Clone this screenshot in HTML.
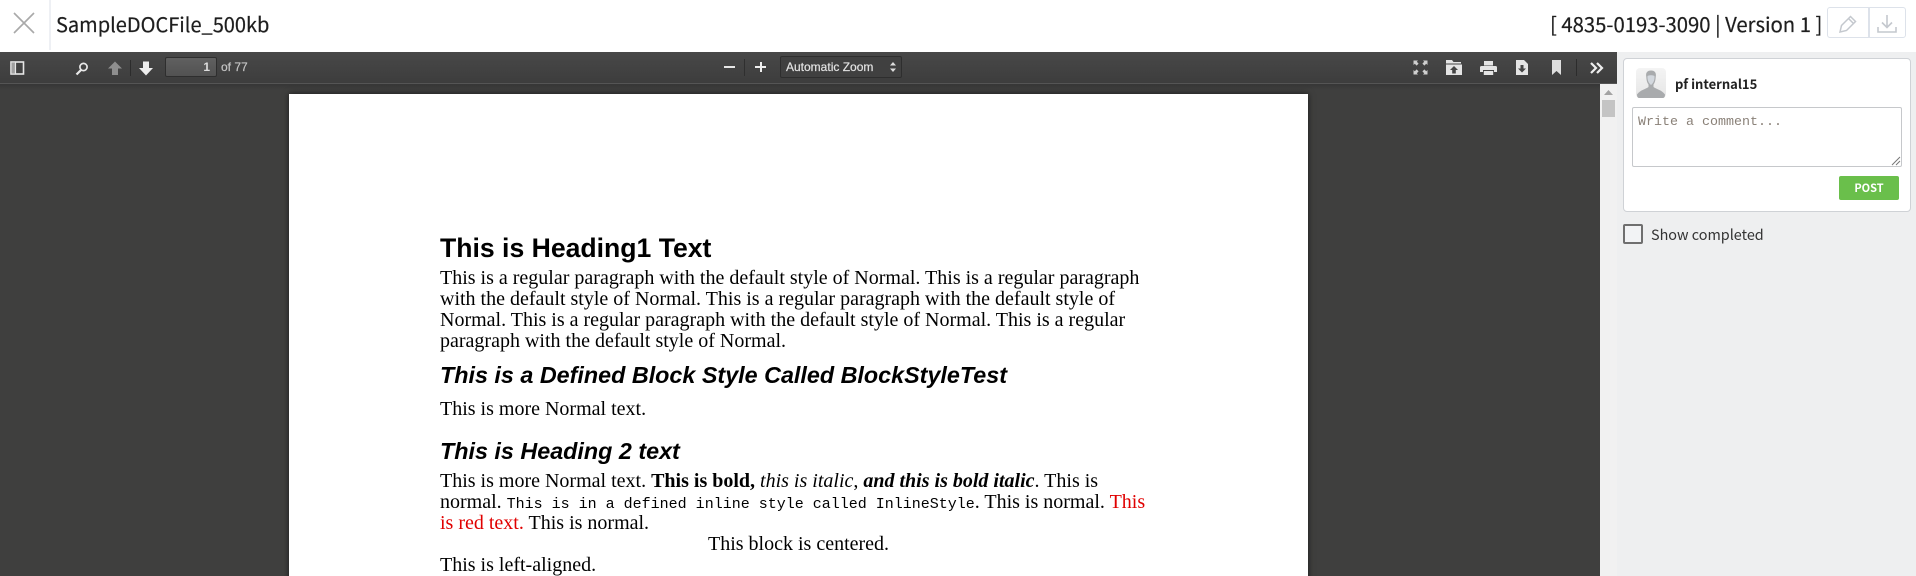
<!DOCTYPE html>
<html><head><meta charset="utf-8"><style>
html,body{margin:0;padding:0;background:#3f3f3e;overflow:hidden}
#r{position:relative;width:1916px;height:576px;overflow:hidden;font-family:"Liberation Sans",sans-serif}
.a{position:absolute;white-space:nowrap}
.s{font-family:"Noto Sans CJK JP","Liberation Sans",sans-serif}
.l{position:absolute;left:440px;white-space:nowrap;font:20px/21px "Liberation Serif",serif;color:#000}
svg{position:absolute;overflow:visible}
</style></head><body><div id="r">
<div class="a" style="left:0;top:0;width:1916px;height:52px;background:#fff"></div>
<svg style="left:13px;top:12px" width="22" height="22"><path d="M1 1L21 21M21 1L1 21" stroke="#a9a9a9" stroke-width="1.6" fill="none"/></svg>
<div class="a" style="left:49px;top:0;width:2px;height:50px;background:#eef0f4"></div>
<div class="a s" style="left:56px;top:9px;font-size:20px;line-height:29px;color:#1e1e1e;-webkit-text-stroke:.2px #1e1e1e">SampleDOCFile_500kb</div>
<div class="a s" style="left:1550px;top:9px;font-size:20.3px;line-height:29px;color:#1e1e1e;-webkit-text-stroke:.2px #1e1e1e">[ 4835-0193-3090 | Version 1 ]</div>
<div class="a" style="left:1827px;top:7px;width:79px;height:31px;border:1.5px solid #dde2ea;border-radius:3px;box-sizing:border-box"></div>
<div class="a" style="left:1868px;top:8px;width:1.5px;height:30px;background:#dde2ea"></div>
<svg style="left:1838px;top:14px" width="20" height="20"><path d="M2 18L3.5 11.5L12.5 2.5L17.5 7.5L8.5 16.5ZM10.5 4.5L15.5 9.5" fill="none" stroke="#c4c8ce" stroke-width="1.5"/></svg>
<svg style="left:1877px;top:14px" width="20" height="20"><path d="M10 1V13M5 8.5L10 13.5L15 8.5M1 13V18H19V13" fill="none" stroke="#c4c8ce" stroke-width="1.6"/></svg>

<div class="a" style="left:0;top:52px;width:1617px;height:32px;background:linear-gradient(#484848,#3d3d3d);border-bottom:1px solid #555;box-sizing:border-box"></div>
<div class="a" style="left:0;top:84px;width:1600px;height:492px;background:#3f3f3e"></div>
<div class="a" style="left:0;top:84px;width:1600px;height:6px;background:linear-gradient(#363636,#3f3f3e)"></div>
<svg style="left:10px;top:61px" width="15" height="14"><rect x="1" y="1" width="12.5" height="12" fill="none" stroke="#e6e6e6" stroke-width="1.6"/><rect x="1.5" y="1.5" width="3.5" height="11" fill="#a0a0a0"/><path d="M5.5 1V13" stroke="#e6e6e6" stroke-width="1.2"/></svg>
<svg style="left:75px;top:62px" width="14" height="14"><circle cx="8.5" cy="5" r="3.6" fill="none" stroke="#e8e8e8" stroke-width="1.7"/><path d="M6 8L1.5 12.5" stroke="#e8e8e8" stroke-width="2.2"/></svg>
<svg style="left:108px;top:61px" width="14" height="15"><path d="M7 0.5L14 7.5H10V14H4V7.5H0Z" fill="#8e8e8e"/></svg>
<div class="a" style="left:130px;top:60px;width:1px;height:16px;background:#2c2c2c"></div>
<svg style="left:139px;top:61px" width="14" height="15"><path d="M4 0.5H10V7H14L7 14.5L0 7H4Z" fill="#eee"/></svg>
<div class="a" style="left:165px;top:57px;width:52px;height:20px;background:linear-gradient(#606060,#525252);border:1px solid #2e2e2e;border-radius:2px;box-sizing:border-box;color:#ddd;font-size:12px;line-height:18px;text-align:right;padding-right:6px;font-weight:bold">1</div>
<div class="a" style="left:221px;top:59px;font-size:12px;line-height:16px;color:#c4c4c4;-webkit-text-stroke:.2px #c4c4c4">of 77</div>
<div class="a" style="left:724px;top:66px;width:11px;height:2px;background:#e6e6e6"></div>
<div class="a" style="left:744px;top:59px;width:1px;height:17px;background:#2f2f2f"></div>
<div class="a" style="left:755px;top:66px;width:11px;height:2px;background:#eee"></div>
<div class="a" style="left:759.5px;top:62px;width:2px;height:10px;background:#eee"></div>
<div class="a" style="left:780px;top:56px;width:122px;height:22px;background:#404040;border:1px solid #2e2e2e;border-radius:2px;box-sizing:border-box"></div>
<div class="a" style="left:786px;top:59px;font-size:12px;line-height:16px;color:#e2e2e2;-webkit-text-stroke:.2px #e2e2e2">Automatic Zoom</div>
<svg style="left:889px;top:62px" width="8" height="10"><path d="M4 0L7 3.5H1ZM4 10L7 6.5H1Z" fill="#ddd"/></svg>
<svg style="left:1413px;top:60px" width="15" height="15" fill="#cfcfcf"><path d="M0.5 0.5H5L3.8 1.8L5.6 3.6L3.6 5.6L1.8 3.8L0.5 5ZM14.5 0.5V5L13.2 3.8L11.4 5.6L9.4 3.6L11.2 1.8L10 0.5ZM0.5 14.5V10L1.8 11.2L3.6 9.4L5.6 11.4L3.8 13.2L5 14.5ZM14.5 14.5H10L11.2 13.2L9.4 11.4L11.4 9.4L13.2 11.2L14.5 10Z"/></svg>
<svg style="left:1446px;top:60px" width="16" height="15"><path d="M0 0H6L7.5 2H15V3.5H0ZM0 4.5H16V15H0Z" fill="#e4e4e4"/><path d="M8 6L12 10H9.8V13.5H6.2V10H4Z" fill="#444"/></svg>
<svg style="left:1480px;top:61px" width="17" height="14"><path d="M4 0H13V4.5H4ZM1.5 5H15.5Q17 5 17 6.5V11H14V9H3V11H0V6.5Q0 5 1.5 5ZM3.8 10H13.2V14H3.8Z" fill="#e4e4e4"/></svg>
<svg style="left:1516px;top:60px" width="12" height="15"><path d="M0 0H8L12 4V15H0Z" fill="#e4e4e4"/><path d="M4.5 5H7.5V8.5H10L6 12.5L2 8.5H4.5Z" fill="#444"/></svg>
<svg style="left:1552px;top:60px" width="9" height="15"><path d="M0 0H9V15L4.5 11L0 15Z" fill="#dedede"/></svg>
<div class="a" style="left:1576px;top:59px;width:1px;height:17px;background:#2c2c2c"></div>
<svg style="left:1590px;top:62px" width="14" height="12"><path d="M1 1L6 6L1 11M7 1L12 6L7 11" fill="none" stroke="#eee" stroke-width="2.2"/></svg>

<div class="a" style="left:1600px;top:84px;width:17px;height:492px;background:#f1f1f1"></div>
<svg style="left:1604px;top:90px" width="9" height="6"><path d="M4.5 0L9 5H0Z" fill="#a3a3a3"/></svg>
<div class="a" style="left:1602px;top:100px;width:13px;height:17px;background:#c4c4c4"></div>

<div class="a" style="left:1617px;top:52px;width:299px;height:524px;background:#eeeff0"></div>
<div class="a" style="left:1623px;top:58px;width:288px;height:154px;background:#fff;border:1px solid #cfd2d6;border-radius:4px;box-sizing:border-box"></div>
<div class="a" style="left:1636px;top:68px;width:30px;height:30px;background:linear-gradient(#f4f4f4,#e6e6e6);border-radius:4px"></div>
<svg style="left:1636px;top:68px" width="30" height="30"><path d="M15 2.5C11 2.5 9.5 5 10.3 9C10.5 12 10.8 14 12.5 16.5V19C10 21 4 22 1 26.5Q1 30 3 30H27Q29 30 29 26.5C26 22 20 21 17.5 19V16.5C19.2 14 19.5 12 19.7 9C20.5 5 19 2.5 15 2.5Z" fill="#a9abad"/><path d="M11.5 8C13 7 17 7 18.5 8C18.8 12 17.5 15 15 17C12.5 15 11.2 12 11.5 8Z" fill="#d3d8de"/></svg>
<div class="a s" style="left:1675px;top:74px;font-size:13px;line-height:19px;font-weight:700;color:#222">pf internal15</div>
<div class="a" style="left:1632px;top:107px;width:270px;height:60px;background:#fff;border:1px solid #c6c8cb;border-radius:2px;box-sizing:border-box"></div>
<div class="a" style="left:1638px;top:115px;font:13.33px/15px 'Liberation Mono',monospace;color:#8a8178">Write a comment...</div>
<svg style="left:1891px;top:156px" width="10" height="10"><path d="M1 9L9 1M5 9L9 5" stroke="#777" stroke-width="1"/></svg>
<div class="a s" style="left:1839px;top:176px;width:60px;height:24px;background:#6abf4b;border-radius:2px;color:#fff;font-size:11px;font-weight:700;line-height:24px;text-align:center">POST</div>
<div class="a" style="left:1623px;top:224px;width:20px;height:20px;border:2px solid #6f6f6f;background:#f2f3f5;border-radius:2px;box-sizing:border-box"></div>
<div class="a s" style="left:1651px;top:224px;font-size:14.4px;line-height:21px;color:#333">Show completed</div>

<div class="a" style="left:289px;top:94px;width:1019px;height:500px;background:#fff;box-shadow:0 0 6px rgba(0,0,0,.6)"></div>
<div class="a" style="left:440px;top:233px;font:bold 26.6px/31px 'Liberation Sans',sans-serif;color:#000">This is Heading1 Text</div>
<div class="l" style="top:268px">This is a regular paragraph with the default style of Normal. This is a regular paragraph</div>
<div class="l" style="top:289px">with the default style of Normal. This is a regular paragraph with the default style of</div>
<div class="l" style="top:310px">Normal. This is a regular paragraph with the default style of Normal. This is a regular</div>
<div class="l" style="top:331px">paragraph with the default style of Normal.</div>
<div class="a" style="left:440px;top:362px;font:italic bold 23.33px/27px 'Liberation Sans',sans-serif;color:#000">This is a Defined Block Style Called BlockStyleTest</div>
<div class="l" style="top:399px">This is more Normal text.</div>
<div class="a" style="left:440px;top:438px;font:italic bold 23.33px/27px 'Liberation Sans',sans-serif;color:#000">This is Heading 2 text</div>
<div class="l" style="top:471px">This is more Normal text. <b>This is bold,</b> <i>this is italic</i>, <b><i>and this is bold italic</i></b>. This is</div>
<div class="l" style="top:492px">normal. <span style="font:15px/21px 'Liberation Mono',monospace">This is in a defined inline style called InlineStyle</span>. This is normal. <span style="color:#e00000">This</span></div>
<div class="l" style="top:513px"><span style="color:#e00000">is red text.</span> This is normal.</div>
<div class="l" style="top:534px;left:708px">This block is centered.</div>
<div class="l" style="top:555px">This is left-aligned.</div>
</div></body></html>
